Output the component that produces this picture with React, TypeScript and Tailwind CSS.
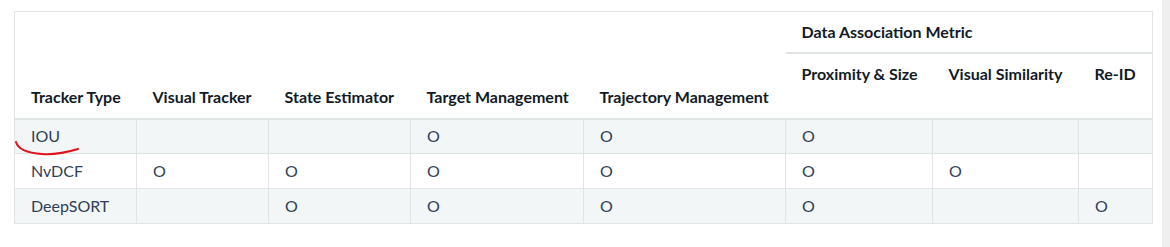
import React from 'react';

type Mark = boolean;

interface TrackerRow {
  name: string;
  marks: Mark[];
}

const COL_WIDTHS = [122, 132, 142, 173, 202, 147, 146, 74];

const LEAD_HEADERS = [
  'Tracker Type',
  'Visual Tracker',
  'State Estimator',
  'Target Management',
  'Trajectory Management',
];

const METRIC_HEADERS = ['Proximity & Size', 'Visual Similarity', 'Re-ID'];

const ROWS: TrackerRow[] = [
  { name: 'IOU', marks: [false, false, true, true, true, false, false] },
  { name: 'NvDCF', marks: [true, true, true, true, true, true, false] },
  { name: 'DeepSORT', marks: [false, true, true, true, true, false, true] },
];

export default function App() {
  return (
    <div
      className="relative flex h-[247px] w-[1170px] overflow-hidden bg-white"
      style={{ fontFamily: 'Lato, "Noto Sans", sans-serif' }}
    >
      <div className="flex-1 pl-[14px] pt-[11px]">
        <table className="w-[1138px] table-fixed border-collapse border border-[#e1e4e5] text-[16px] leading-[18px]">
          <colgroup>
            {COL_WIDTHS.map((w, i) => (
              <col key={i} style={{ width: w }} />
            ))}
          </colgroup>
          <thead className="border-b-2 border-[#e1e4e5] text-[#111a26]">
            <tr className="h-[41px]">
              {LEAD_HEADERS.map((label) => (
                <th
                  key={label}
                  rowSpan={2}
                  className="px-4 pb-[12px] text-left align-bottom font-bold whitespace-nowrap"
                >
                  {label}
                </th>
              ))}
              <th
                colSpan={3}
                className="border-b-2 border-[#e1e4e5] px-4 text-left align-middle font-bold"
              >
                Data Association Metric
              </th>
            </tr>
            <tr className="h-[66px]">
              {METRIC_HEADERS.map((label) => (
                <th
                  key={label}
                  className="px-4 pt-[11px] text-left align-top font-bold whitespace-nowrap"
                >
                  {label}
                </th>
              ))}
            </tr>
          </thead>
          <tbody className="text-[#2f3f56]">
            {ROWS.map((row, r) => (
              <tr key={row.name} className={`h-[35px] ${r % 2 === 0 ? 'bg-[#f3f6f6]' : 'bg-white'}`}>
                <td className="border border-[#e1e4e5] px-4 align-middle">{row.name}</td>
                {row.marks.map((m, c) => (
                  <td key={c} className="border border-[#e1e4e5] px-4 align-middle">
                    {m ? 'O' : ''}
                  </td>
                ))}
              </tr>
            ))}
          </tbody>
        </table>
      </div>

      {/* scrollbar track */}
      <div className="w-[8px] bg-[#efefef]" />

      {/* hand-drawn underline under IOU */}
      <svg
        className="pointer-events-none absolute left-0 top-0"
        width="100"
        height="170"
        viewBox="0 0 100 170"
        fill="none"
      >
        <path
          d="M16 142 C18 149, 26 153, 42 154 C55 155, 68 152, 78 149"
          stroke="#e3101b"
          strokeWidth="2"
          strokeLinecap="round"
        />
      </svg>
    </div>
  );
}
